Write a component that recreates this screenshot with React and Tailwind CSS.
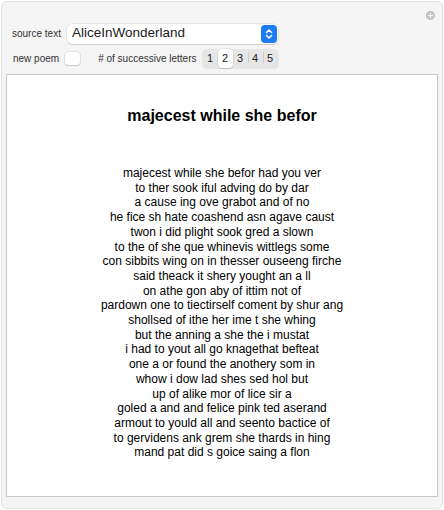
const LINES = [
  'majecest while she befor had you ver',
  'to ther sook iful adving do by dar',
  'a cause ing ove grabot and of no',
  'he fice sh hate coashend asn agave caust',
  'twon i did plight sook gred a slown',
  'to the of she que whinevis wittlegs some',
  'con sibbits wing on in thesser ouseeng firche',
  'said theack it shery yought an a ll',
  'on athe gon aby of ittim not of',
  'pardown one to tiectirself coment by shur ang',
  'shollsed of ithe her ime t she whing',
  'but the anning a she the i mustat',
  'i had to yout all go knagethat befteat',
  'one a or found the anothery som in',
  'whow i dow lad shes sed hol but',
  'up of alike mor of lice sir a',
  'goled a and and felice pink ted aserand',
  'armout to yould all and seento bactice of',
  'to gervidens ank grem she thards in hing',
  'mand pat did s goice saing a flon',
]

const font = { fontFamily: '"Liberation Sans", Arial, sans-serif' }

function Segment({ n, selected, divider }) {
  if (selected) {
    return (
      <span className="w-[15px] h-[19px] bg-white rounded-[4px] shadow-[0_0_0_0.5px_rgba(0,0,0,0.12),0_1px_1px_rgba(0,0,0,0.12)] flex items-center justify-center">
        {n}
      </span>
    )
  }
  return (
    <span className="relative w-[15px] text-center">
      {divider && <span className="absolute left-0 top-[2px] w-px h-[11px] bg-[#cdcdcd]" />}
      {n}
    </span>
  )
}

export default function App() {
  return (
    <div className="w-[444px] h-[510px] bg-white p-px" style={font}>
      <div className="relative h-full rounded-md border border-[#e2e2e2] bg-[#f5f5f5] px-[4px] pt-[21px] pb-[11px] flex flex-col">
        <div className="absolute right-[7px] top-[9px] w-[9px] h-[9px] rounded-full bg-[#c2c2c2] flex items-center justify-center">
          <span className="block w-[5px] h-px bg-white absolute" />
          <span className="block w-px h-[5px] bg-white absolute" />
        </div>

        <div className="flex items-center h-[21px]">
          <span className="text-[10px] text-[#333] ml-[6px]">source text</span>
          <div className="ml-[6px] w-[211px] h-[20px] bg-white rounded-[5px] shadow-[0_0_0_0.5px_rgba(0,0,0,0.12),0_1px_1px_rgba(0,0,0,0.1)] flex items-center pl-[5px] pr-px">
            <span className="text-[13.5px] text-[#1a1a1a] flex-1">AliceInWonderland</span>
            <div className="w-[16px] h-[18px] rounded-[4px] bg-[#1c7cf4] flex items-center justify-center">
              <svg width="8" height="12" viewBox="0 0 8 12" fill="none" stroke="white" strokeWidth="1.6" strokeLinecap="round" strokeLinejoin="round">
                <path d="M1.5 4.5 L4 2 L6.5 4.5" />
                <path d="M1.5 7.5 L4 10 L6.5 7.5" />
              </svg>
            </div>
          </div>
        </div>

        <div className="flex items-center h-[21px] mt-[4px]">
          <span className="text-[10px] text-[#333] ml-[7px]">new poem</span>
          <div className="ml-[6px] w-[15px] h-[13px] bg-white rounded-[3px] shadow-[0_0_0_0.5px_rgba(0,0,0,0.15),0_1px_1px_rgba(0,0,0,0.1)]" />
          <span className="text-[10px] text-[#333] ml-[18px]"># of successive letters</span>
          <div className="ml-[5px] w-[77px] h-[20px] bg-[#e6e6e6] rounded-[5px] flex items-center px-px text-[11px] text-[#222]">
            <Segment n="1" />
            <Segment n="2" selected />
            <Segment n="3" />
            <Segment n="4" divider />
            <Segment n="5" divider />
          </div>
        </div>

        <div className="mt-[5px] flex-1 bg-white border border-[#c9c9c9] flex flex-col items-center text-black">
          <div className="mt-[29px] text-[16px] font-bold">majecest while she befor</div>
          <div className="mt-[38px] text-[12px] leading-[14.7px] text-center">
            {LINES.map((l) => (
              <div key={l}>{l}</div>
            ))}
          </div>
        </div>
      </div>
    </div>
  )
}
